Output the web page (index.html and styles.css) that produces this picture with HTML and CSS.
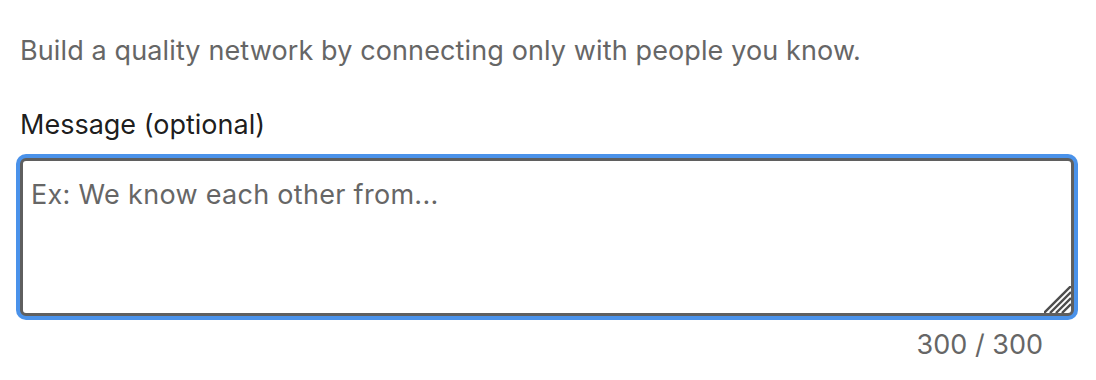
FILE: index.html
```html
<!DOCTYPE html>
<html lang="en">
<head>
<meta charset="utf-8">
<title>Add a note</title>
<link rel="stylesheet" href="styles.css">
</head>
<body>
<main class="invite">
  <p class="intro">Build a quality network by connecting only with people you know.</p>
  <label class="label" for="msg">Message (optional)</label>
  <div class="field">
    <textarea id="msg" class="message" placeholder="Ex: We know each other from..."></textarea>
    <svg class="grip" width="27" height="27" viewBox="0 0 27 27" aria-hidden="true">
      <g stroke="#4d4d4d" stroke-width="2.4" stroke-linecap="butt">
        <line x1="0" y1="27" x2="27" y2="0"/>
        <line x1="6" y1="27" x2="27" y2="6"/>
        <line x1="12" y1="27" x2="27" y2="12"/>
        <line x1="18" y1="27" x2="27" y2="18"/>
      </g>
    </svg>
  </div>
  <div class="counter">300 / 300</div>
</main>
</body>
</html>
```
FILE: styles.css
```css
html, body {
  margin: 0;
  background: #fff;
}

body {
  font-family: Inter, "Noto Sans", "Liberation Sans", sans-serif;
}

.invite {
  padding: 35px 22px 0 20px;
  display: flex;
  flex-direction: column;
}

.intro {
  margin: 0;
  font-size: 27px;
  line-height: 32px;
  letter-spacing: 0.12px;
  color: #666;
}

.label {
  margin-top: 40px;
  font-size: 27px;
  line-height: 36px;
  color: rgba(0, 0, 0, 0.9);
}

.field {
  position: relative;
  margin-top: 15px;
  height: 158px;
}

.message {
  display: block;
  box-sizing: border-box;
  width: 100%;
  height: 100%;
  margin: 0;
  padding: 16px 8px;
  border: 3px solid #5f5f5f;
  border-radius: 6px;
  box-shadow: 0 0 0 4px #4a92ea;
  outline: none;
  resize: none;
  font-family: inherit;
  font-size: 27px;
  line-height: 36px;
  letter-spacing: 0.3px;
  color: rgba(0, 0, 0, 0.9);
  background: #fff;
}

.message::placeholder {
  color: #666;
  opacity: 1;
}

.grip {
  position: absolute;
  right: 3px;
  bottom: 3px;
}

.counter {
  margin-top: 11px;
  padding-right: 31px;
  text-align: right;
  font-size: 27px;
  line-height: 36px;
  color: #666;
}
```
